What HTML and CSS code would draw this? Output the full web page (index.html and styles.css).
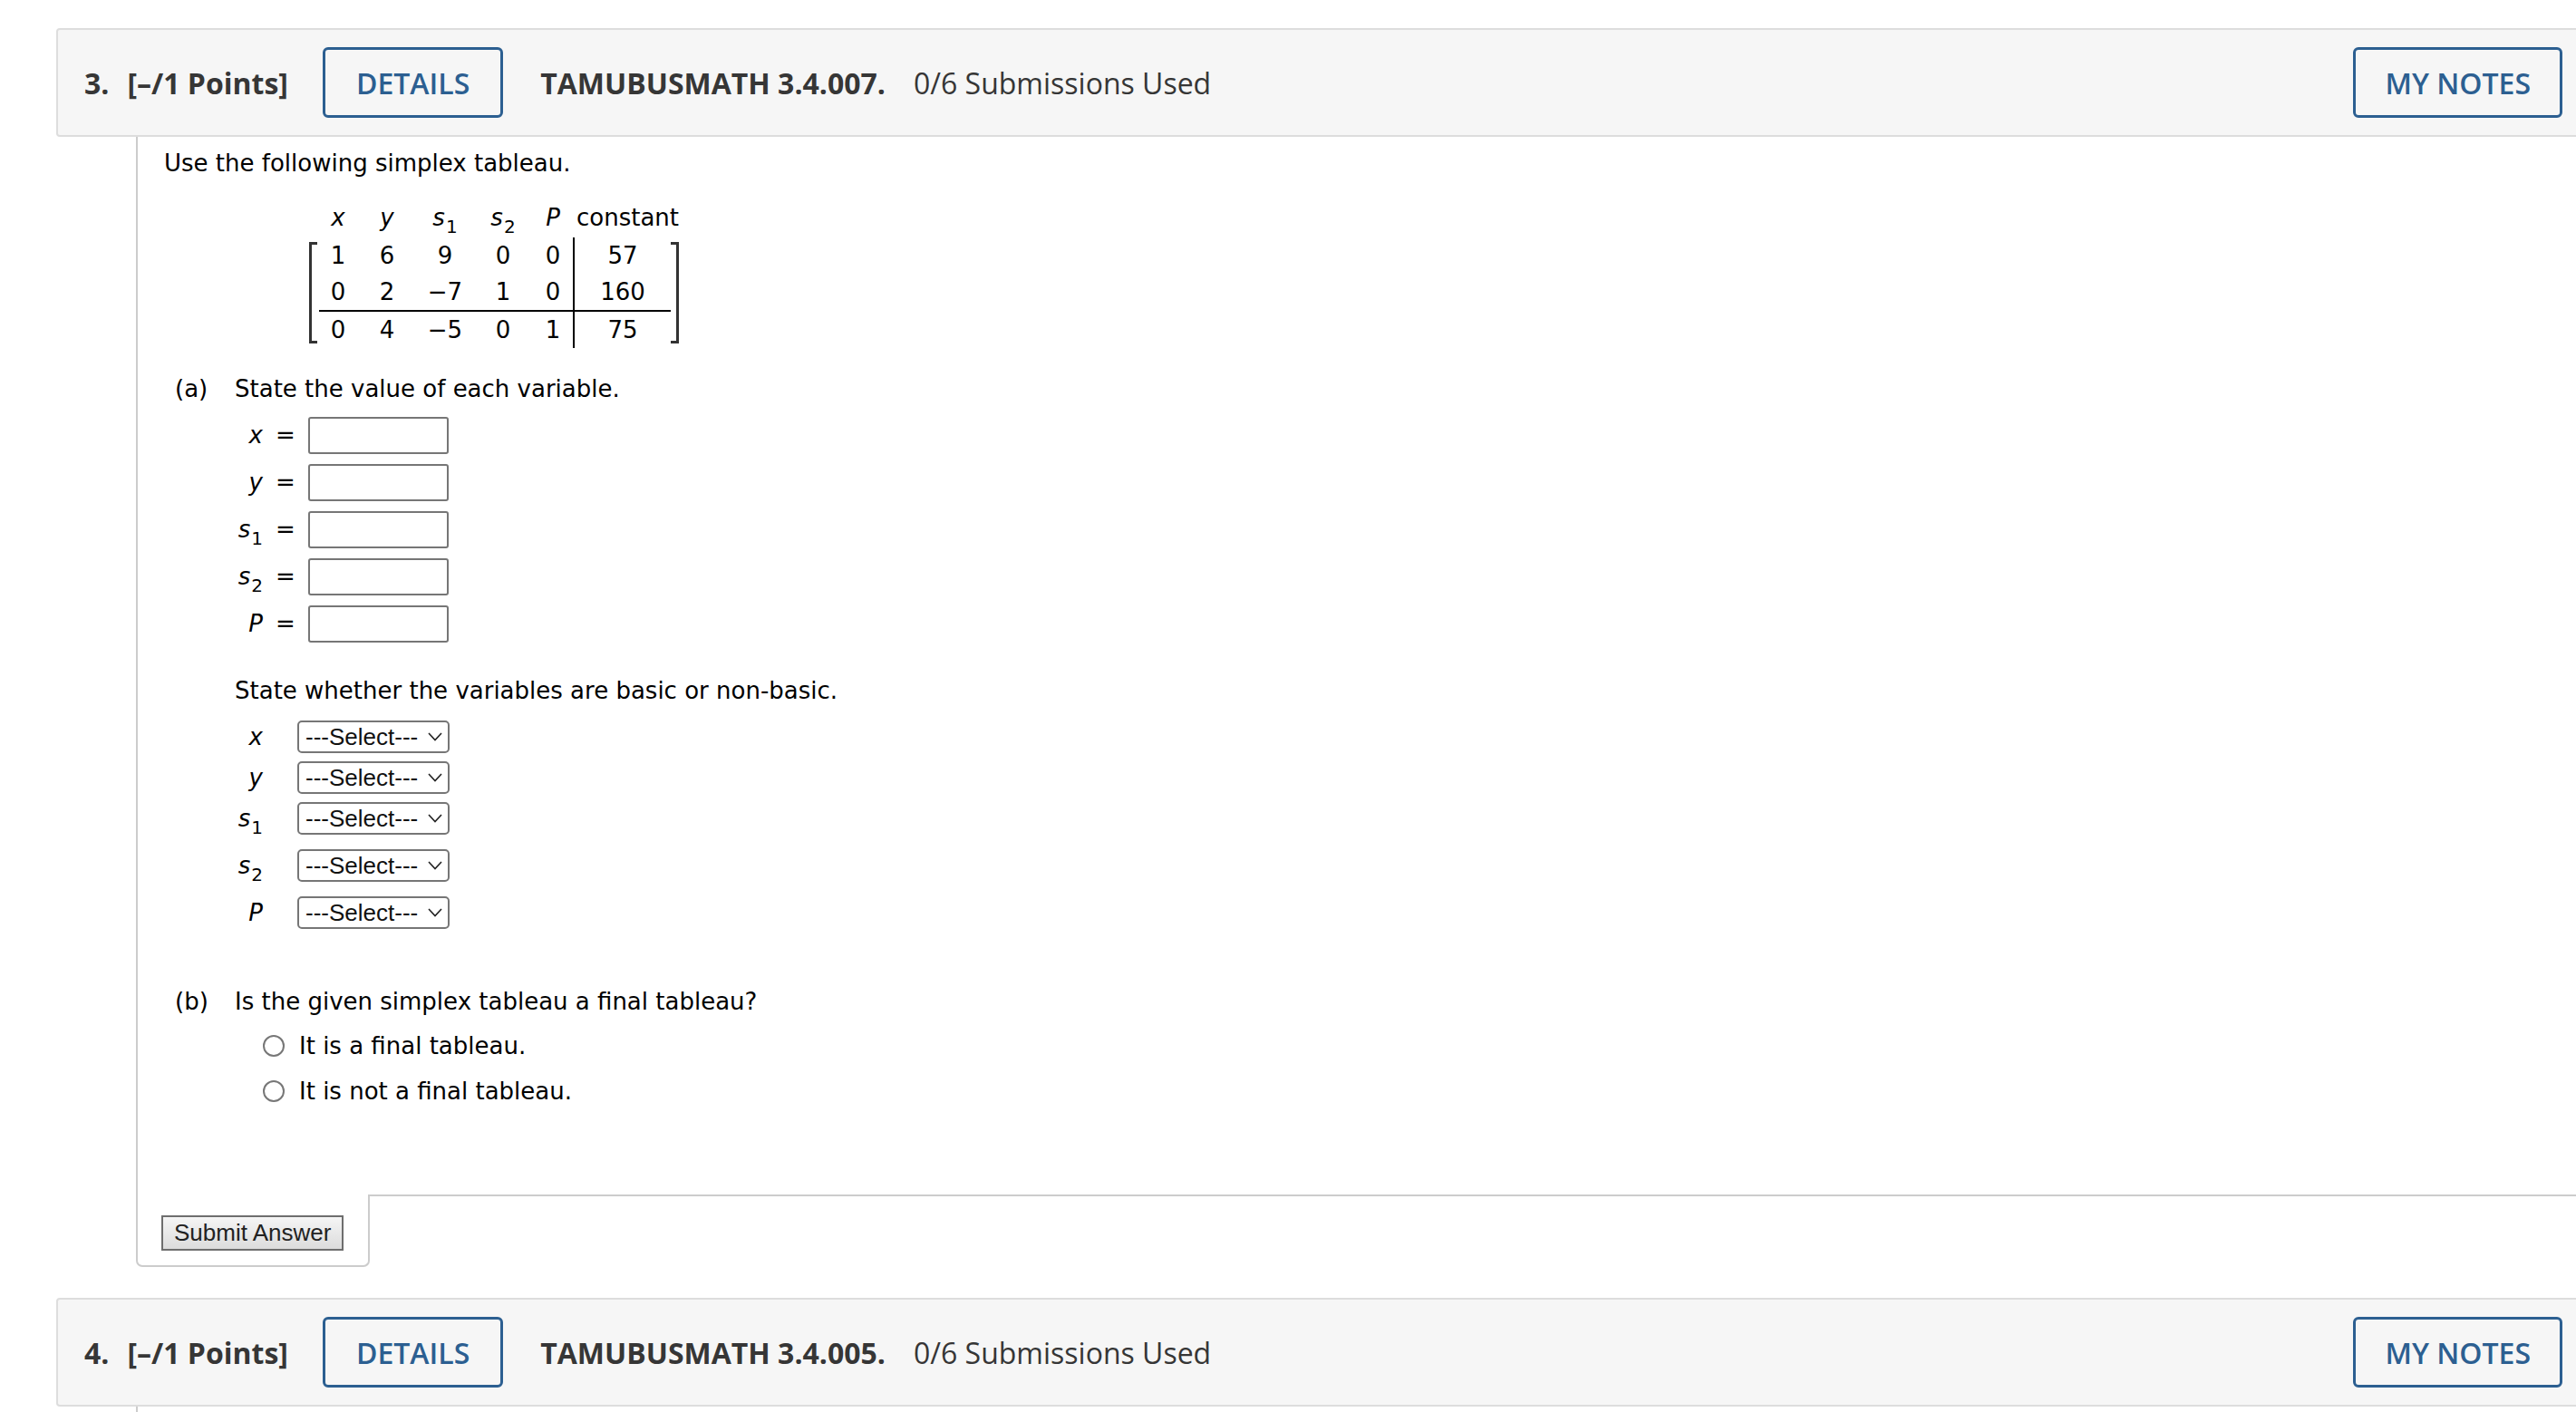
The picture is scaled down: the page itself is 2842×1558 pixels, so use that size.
FILE: index.html
```html
<!DOCTYPE html>
<html lang="en">
<head>
<meta charset="utf-8">
<title>Simplex tableau question</title>
<link rel="stylesheet" href="styles.css">
</head>
<body>
<div class="page">
  <section class="question">
    <header class="qhead">
      <span class="qnum">3.</span>
      <span class="qpts">[–/1 Points]</span>
      <button class="hbtn details" type="button">DETAILS</button>
      <span class="qcode">TAMUBUSMATH 3.4.007.</span>
      <span class="qsubs">0/6 Submissions Used</span>
      <span class="spacer"></span>
      <button class="hbtn notes" type="button">MY NOTES</button>
    </header>
    <div class="qbody">
      <div class="qmain">
        <p class="intro">Use the following simplex tableau.</p>
        <div class="tableau">
          <div class="thead">
            <span><i>x</i></span>
            <span><i>y</i></span>
            <span><i>s</i><sub>1</sub></span>
            <span><i>s</i><sub>2</sub></span>
            <span><i>P</i></span>
            <span class="tconst">constant</span>
          </div>
          <div class="matrix">
            <span class="brk brk-l"></span>
            <div class="mgrid">
              <span>1</span><span>6</span><span>9</span><span>0</span><span>0</span><span class="cc">57</span>
              <span>0</span><span>2</span><span>−7</span><span>1</span><span>0</span><span class="cc">160</span>
              <span class="lr">0</span><span class="lr">4</span><span class="lr">−5</span><span class="lr">0</span><span class="lr">1</span><span class="cc lr">75</span>
            </div>
            <span class="brk brk-r"></span>
          </div>
        </div>

        <div class="part">
          <span class="plabel">(a)</span>
          <span>State the value of each variable.</span>
        </div>
        <div class="vars">
          <div class="vrow"><span class="vl"><i>x</i></span><span class="eq">=</span><input class="txt" type="text"></div>
          <div class="vrow"><span class="vl"><i>y</i></span><span class="eq">=</span><input class="txt" type="text"></div>
          <div class="vrow"><span class="vl"><i>s</i><sub>1</sub></span><span class="eq">=</span><input class="txt" type="text"></div>
          <div class="vrow"><span class="vl"><i>s</i><sub>2</sub></span><span class="eq">=</span><input class="txt" type="text"></div>
          <div class="vrow"><span class="vl"><i>P</i></span><span class="eq">=</span><input class="txt" type="text"></div>
        </div>

        <p class="subq">State whether the variables are basic or non-basic.</p>
        <div class="sels">
          <div class="srow"><span class="vl"><i>x</i></span><span class="sel"><select><option>---Select---</option><option>basic</option><option>non-basic</option></select><svg class="chev" viewBox="0 0 16 10" width="16" height="10"><polyline points="1,1 8,8.5 15,1" fill="none" stroke="#222" stroke-width="1.6"/></svg></span></div>
          <div class="srow"><span class="vl"><i>y</i></span><span class="sel"><select><option>---Select---</option><option>basic</option><option>non-basic</option></select><svg class="chev" viewBox="0 0 16 10" width="16" height="10"><polyline points="1,1 8,8.5 15,1" fill="none" stroke="#222" stroke-width="1.6"/></svg></span></div>
          <div class="srow tall"><span class="vl"><i>s</i><sub>1</sub></span><span class="sel"><select><option>---Select---</option><option>basic</option><option>non-basic</option></select><svg class="chev" viewBox="0 0 16 10" width="16" height="10"><polyline points="1,1 8,8.5 15,1" fill="none" stroke="#222" stroke-width="1.6"/></svg></span></div>
          <div class="srow tall"><span class="vl"><i>s</i><sub>2</sub></span><span class="sel"><select><option>---Select---</option><option>basic</option><option>non-basic</option></select><svg class="chev" viewBox="0 0 16 10" width="16" height="10"><polyline points="1,1 8,8.5 15,1" fill="none" stroke="#222" stroke-width="1.6"/></svg></span></div>
          <div class="srow"><span class="vl"><i>P</i></span><span class="sel"><select><option>---Select---</option><option>basic</option><option>non-basic</option></select><svg class="chev" viewBox="0 0 16 10" width="16" height="10"><polyline points="1,1 8,8.5 15,1" fill="none" stroke="#222" stroke-width="1.6"/></svg></span></div>
        </div>

        <div class="part partb">
          <span class="plabel">(b)</span>
          <span>Is the given simplex tableau a final tableau?</span>
        </div>
        <div class="radios">
          <label class="rrow"><input type="radio" name="final"><span>It is a final tableau.</span></label>
          <label class="rrow"><input type="radio" name="final"><span>It is not a final tableau.</span></label>
        </div>
      </div>
      <div class="qfoot">
        <div class="submit-cell"><button class="submit" type="button">Submit Answer</button></div>
        <div class="foot-rest"></div>
      </div>
    </div>
  </section>

  <section class="question q2">
    <header class="qhead">
      <span class="qnum">4.</span>
      <span class="qpts">[–/1 Points]</span>
      <button class="hbtn details" type="button">DETAILS</button>
      <span class="qcode">TAMUBUSMATH 3.4.005.</span>
      <span class="qsubs">0/6 Submissions Used</span>
      <span class="spacer"></span>
      <button class="hbtn notes" type="button">MY NOTES</button>
    </header>
    <div class="qbody">
      <div class="qmain qmain-next"></div>
    </div>
  </section>
</div>
</body>
</html>
```

FILE: styles.css
```css
html, body {
  margin: 0;
  padding: 0;
  overflow: hidden;
  background: #ffffff;
}

body {
  font-family: "DejaVu Sans", Verdana, sans-serif;
  font-size: 26px;
  color: #000;
}

.page {
  padding-top: 31px;
  padding-left: 62px;
  width: 2800px;
}

/* ---------- question header ---------- */
.qhead {
  display: flex;
  align-items: center;
  background: #f6f6f6;
  border: 2px solid #dddddd;
  border-radius: 4px;
  padding: 19px 33px 19px 29px;
  font-family: "Open Sans", "Liberation Sans", sans-serif;
  font-size: 32px;
  color: #363636;
}

.qnum {
  font-weight: 700;
  margin-right: 20px;
}

.qpts {
  font-weight: 700;
  margin-right: 38px;
}

.hbtn {
  height: 78px;
  box-sizing: border-box;
  border: 3px solid #2c5f91;
  border-radius: 6px;
  background: transparent;
  color: #2c5f91;
  font-family: "Open Sans", "Liberation Sans", sans-serif;
  font-size: 32px;
  font-weight: 600;
  padding: 0 34px;
  margin: 0;
}

.notes {
  padding: 0 32px;
}

.details {
  margin-right: 41px;
}

.qcode {
  font-weight: 700;
  margin-right: 31px;
}

.qsubs {
  font-weight: 400;
}

.spacer {
  flex: 1;
}

/* ---------- question body ---------- */
.qbody {
  margin-left: 88px;
}

.qmain {
  border-left: 2px solid #cccccc;
  padding: 14px 0 89px 29px;
}

.qmain-next {
  height: 40px;
  padding: 0;
}

.intro {
  margin: 0;
  line-height: 30px;
}

/* ---------- tableau ---------- */
.tableau {
  margin: 25px 0 0 160px;
}

.thead,
.mgrid {
  display: grid;
  grid-template-columns: 42px 66px 62px 66px 44px 108px;
  text-align: center;
}

.thead {
  margin-left: 11px;
  line-height: 40px;
  height: 40px;
}

.tconst {
  padding-left: 4px;
}

.thead i,
.vl i {
  font-style: italic;
}

sub {
  font-size: 20px;
  line-height: 0;
  vertical-align: -8px;
  margin-left: 1px;
}

.matrix {
  display: flex;
  align-items: center;
  margin-top: 2px;
}

.brk {
  width: 9px;
  height: 112px;
  box-sizing: border-box;
  border: 3px solid #333;
}

.brk-l {
  border-right: none;
  margin-right: 2px;
}

.brk-r {
  border-left: none;
}

.mgrid span {
  line-height: 40px;
  height: 40px;
}

.mgrid .cc {
  border-left: 2px solid #000;
}

.mgrid .lr {
  border-top: 2px solid #000;
}

/* ---------- parts ---------- */
.part {
  display: flex;
  margin: 30px 0 0 12px;
  line-height: 30px;
}

.plabel {
  width: 66px;
}

.partb {
  margin-top: 60px;
}

.vars {
  margin: 10px 0 0 71px;
}

.vrow {
  display: flex;
  align-items: center;
  height: 52px;
}

.vl {
  display: inline-block;
  width: 38px;
  text-align: right;
  white-space: nowrap;
}

.eq {
  width: 22px;
  margin-left: 14px;
  text-align: center;
}

.txt {
  width: 155px;
  height: 41px;
  box-sizing: border-box;
  margin: 0 0 0 14px;
  border: 2px solid #767676;
  border-radius: 3px;
  background: #fff;
  padding: 0 6px;
  font-family: "Liberation Sans", Arial, sans-serif;
  font-size: 24px;
}

.subq {
  margin: 33px 0 0 78px;
  line-height: 30px;
}

.sels {
  margin: 14px 0 0 71px;
}

.srow {
  display: flex;
  align-items: flex-start;
  height: 45px;
}

.srow.tall {
  height: 52px;
}

.srow .vl {
  line-height: 36px;
  margin-top: 4px;
}

.sel {
  position: relative;
  display: inline-block;
  margin: 4px 0 0 38px;
  height: 36px;
}

.sel select {
  appearance: none;
  -webkit-appearance: none;
  width: 168px;
  height: 36px;
  box-sizing: border-box;
  border: 2px solid #767676;
  border-radius: 5px;
  background: #fff;
  color: #111;
  font-family: "Liberation Sans", Arial, sans-serif;
  font-size: 26px;
  padding: 0 0 0 7px;
  margin: 0;
  display: block;
}

.chev {
  position: absolute;
  right: 8px;
  top: 13px;
  pointer-events: none;
}

/* ---------- radios ---------- */
.radios {
  margin: 9px 0 0 109px;
}

.rrow {
  display: flex;
  align-items: center;
  height: 50px;
}

.rrow input {
  appearance: none;
  -webkit-appearance: none;
  width: 24px;
  height: 24px;
  margin: 0 16px 0 0;
  border: 2px solid #777;
  border-radius: 50%;
  background: #fff;
  box-sizing: border-box;
}

/* ---------- footer ---------- */
.qfoot {
  display: flex;
  align-items: flex-start;
}

.submit-cell {
  width: 258px;
  box-sizing: border-box;
  border: 2px solid #cccccc;
  border-top: none;
  border-radius: 0 0 7px 7px;
  padding: 23px 0 16px 26px;
}

.submit {
  display: block;
  height: 39px;
  box-sizing: border-box;
  border: 2px solid #6e6e6e;
  border-radius: 0;
  background: linear-gradient(#f5f5f5, #dcdcdc);
  color: #222;
  font-family: "Liberation Sans", Arial, sans-serif;
  font-size: 26px;
  padding: 0 12px;
  margin: 0;
  line-height: 35px;
}

.foot-rest {
  flex: 1;
  border-top: 2px solid #cccccc;
}

/* ---------- next question ---------- */
.q2 {
  margin-top: 34px;
}
```
